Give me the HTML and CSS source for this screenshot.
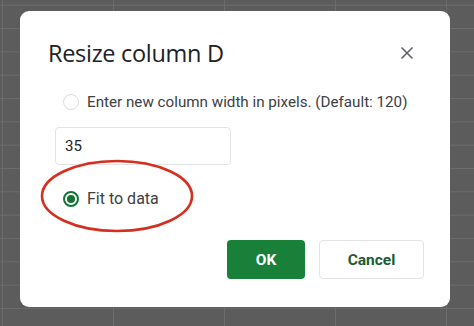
FILE: index.html
```html
<!DOCTYPE html>
<html>
<head>
<meta charset="utf-8">
<link rel="stylesheet" href="styles.css">
</head>
<body>
<div class="sheet">
  <div class="dialog">
    <div class="header">
      <h1 class="title">Resize column D</h1>
      <svg class="close" width="14" height="14" viewBox="0 0 14 14"><path d="M1.5 1.5L12.5 12.5M12.5 1.5L1.5 12.5" stroke="#5f6368" stroke-width="1.6" fill="none"/></svg>
    </div>
    <div class="option">
      <span class="radio"></span>
      <span class="label">Enter new column width in pixels. (Default: 120)</span>
    </div>
    <div class="input">35</div>
    <div class="option option-fit">
      <span class="radio checked"><span class="dot"></span></span>
      <span class="label">Fit to data</span>
      <svg class="circle" width="160" height="76" viewBox="0 0 160 76"><ellipse cx="80" cy="38" rx="75" ry="35" stroke="#d52f1f" stroke-width="2.6" fill="none"/></svg>
    </div>
    <div class="actions">
      <button class="btn ok">OK</button>
      <button class="btn cancel">Cancel</button>
    </div>
  </div>
</div>
</body>
</html>
```
FILE: styles.css
```css
html, body { margin: 0; padding: 0; }
body {
  width: 474px;
  height: 326px;
  overflow: hidden;
  background-color: #5c5c5c;
  background-image:
    linear-gradient(to right, #6c6c6c 1px, transparent 1px),
    linear-gradient(to bottom, #6c6c6c 1px, transparent 1px);
  background-size: 111px 23.33px;
  background-position: 2px 4.7px;
  font-family: Roboto, "Liberation Sans", sans-serif;
}
.sheet { padding: 11px 0 0 20px; }
.dialog {
  width: 430px;
  height: 296px;
  box-sizing: border-box;
  background: #fff;
  border-radius: 9px;
  padding: 0 26px 0 28px;
  display: flex;
  flex-direction: column;
}
.header {
  display: flex;
  justify-content: space-between;
  align-items: center;
  height: 40px;
  margin-top: 22px;
}
.title {
  margin: 0;
  font-family: "Open Sans", Roboto, sans-serif;
  font-weight: 400;
  font-size: 23.5px;
  color: #202124;
  letter-spacing: -0.3px;
}
.close { margin-right: 10px; margin-top: 0; }
.option {
  display: flex;
  align-items: center;
  gap: 8px;
  margin-top: 20px;
  margin-left: 15px;
  position: relative;
}
.radio {
  width: 16px;
  height: 16px;
  box-sizing: border-box;
  border: 1.5px solid #dcdcdc;
  border-radius: 50%;
  display: flex;
  align-items: center;
  justify-content: center;
  flex: none;
}
.radio.checked { border: 2px solid #137333; }
.dot { width: 8px; height: 8px; border-radius: 50%; background: #137333; }
.label { font-size: 15.2px; color: #3c4043; }
.option-fit .label { font-size: 16px; }
.input {
  margin-top: 16px;
  margin-left: 7px;
  width: 176px;
  height: 38px;
  box-sizing: border-box;
  border: 1px solid #e3e3e3;
  border-radius: 4px;
  padding: 0 9px;
  display: flex;
  align-items: center;
  font-size: 15px;
  color: #202124;
}
.option-fit { margin-top: 24px; }
.circle { position: absolute; left: -26px; top: -31px; }
.actions {
  display: flex;
  justify-content: flex-end;
  gap: 14px;
  margin-top: 32px;
}
.btn {
  height: 39px;
  border-radius: 4px;
  font-family: Roboto, "Liberation Sans", sans-serif;
  font-size: 15.5px;
  font-weight: 700;
  cursor: pointer;
}
.ok {
  width: 78px;
  background: #188038;
  color: #fff;
  border: none;
}
.cancel {
  width: 105px;
  background: #fff;
  color: #1e5a35;
  border: 1px solid #e3e3e3;
}
```
